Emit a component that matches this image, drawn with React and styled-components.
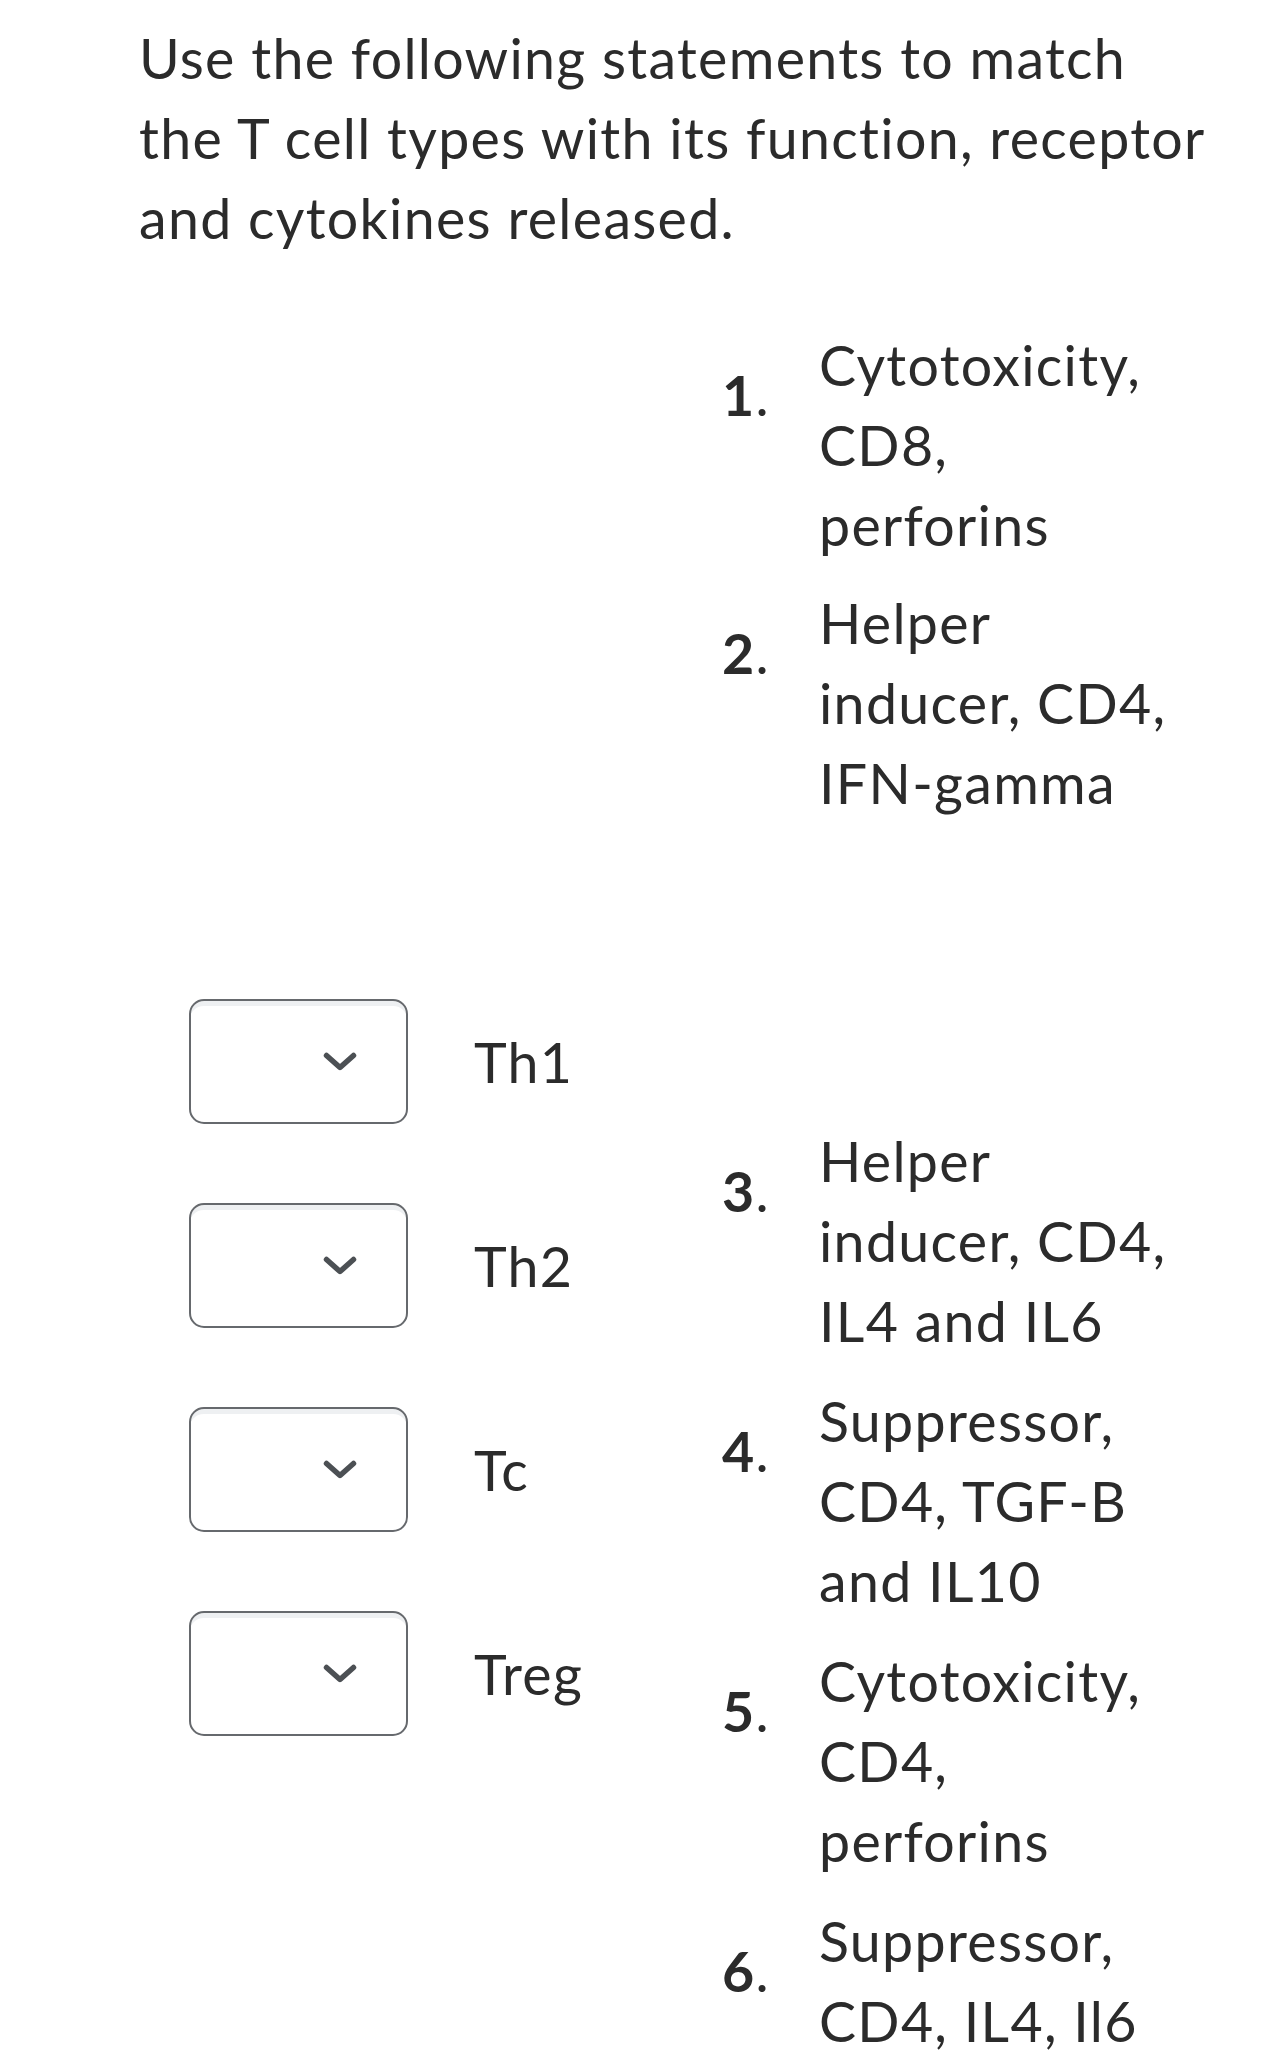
import React from "react";
import styled, { createGlobalStyle } from "styled-components";

const GlobalStyle = createGlobalStyle`
  html, body {
    margin: 0;
    padding: 0;
    background: #ffffff;
  }
  body {
    font-family: Lato, "Open Sans", sans-serif;
    color: #2b2b2b;
  }
`;

const Page = styled.div`
  padding: 18px 0 0 139px;
  font-size: 55.5px;
  line-height: 80px;
  letter-spacing: 1.3px;
`;

const Title = styled.p`
  margin: 0;
  width: 1072px;
`;

const Body = styled.div`
  display: flex;
  align-items: flex-start;
`;

const LeftCol = styled.div`
  flex: none;
  width: 533px;
  margin-left: 50px;
  padding-top: 741px;
  display: flex;
  flex-direction: column;
  gap: 79px;
`;

const Row = styled.div`
  display: flex;
  align-items: center;
`;

const Select = styled.div`
  box-sizing: border-box;
  width: 219px;
  height: 125px;
  border: 2px solid #66696d;
  border-radius: 15px;
  background: #ffffff;
  box-shadow: inset 0 7px 0 -2px #eef0f2;
  display: flex;
  align-items: center;
  justify-content: flex-end;
  padding-right: 49px;
  color: #4c5054;
`;

const Label = styled.span`
  margin-left: 66px;
`;

const AnswerList = styled.ol`
  list-style: none;
  margin: 67px 0 0 0;
  padding: 0;
  display: flex;
  flex-direction: column;
`;

const Answer = styled.li`
  display: flex;
  align-items: flex-start;
  margin-top: ${(p) => p.$gap}px;
`;

const Num = styled.span`
  flex: none;
  width: 97px;
  padding-top: 30px;
  b {
    font-weight: 700;
  }
`;

const AnswerText = styled.span`
  width: 358px;
`;

const Chevron = () => (
  <svg width="34" height="20" viewBox="0 0 34 20" fill="none">
    <path
      d="M3.5 3.5 L17 15.5 L30.5 3.5"
      stroke="currentColor"
      strokeWidth="5.5"
      strokeLinecap="round"
      strokeLinejoin="round"
    />
  </svg>
);

const types = ["Th1", "Th2", "Tc", "Treg"];

const answers = [
  { text: "Cytotoxicity, CD8, perforins", gap: 0 },
  { text: "Helper inducer, CD4, IFN-gamma", gap: 18 },
  { text: "Helper inducer, CD4, IL4 and IL6", gap: 298 },
  { text: "Suppressor, CD4, TGF-B and IL10", gap: 20 },
  { text: "Cytotoxicity, CD4, perforins", gap: 20 },
  { text: "Suppressor, CD4, IL4, Il6", gap: 20 },
];

export default function App() {
  return (
    <Page>
      <GlobalStyle />
      <Title>
        Use the following statements to match the T cell types with its
        function, receptor and cytokines released.
      </Title>
      <Body>
        <LeftCol>
          {types.map((t) => (
            <Row key={t}>
              <Select>
                <Chevron />
              </Select>
              <Label>{t}</Label>
            </Row>
          ))}
        </LeftCol>
        <AnswerList>
          {answers.map((a, i) => (
            <Answer key={i} $gap={a.gap}>
              <Num>
                <b>{i + 1}</b>.
              </Num>
              <AnswerText>{a.text}</AnswerText>
            </Answer>
          ))}
        </AnswerList>
      </Body>
    </Page>
  );
}
